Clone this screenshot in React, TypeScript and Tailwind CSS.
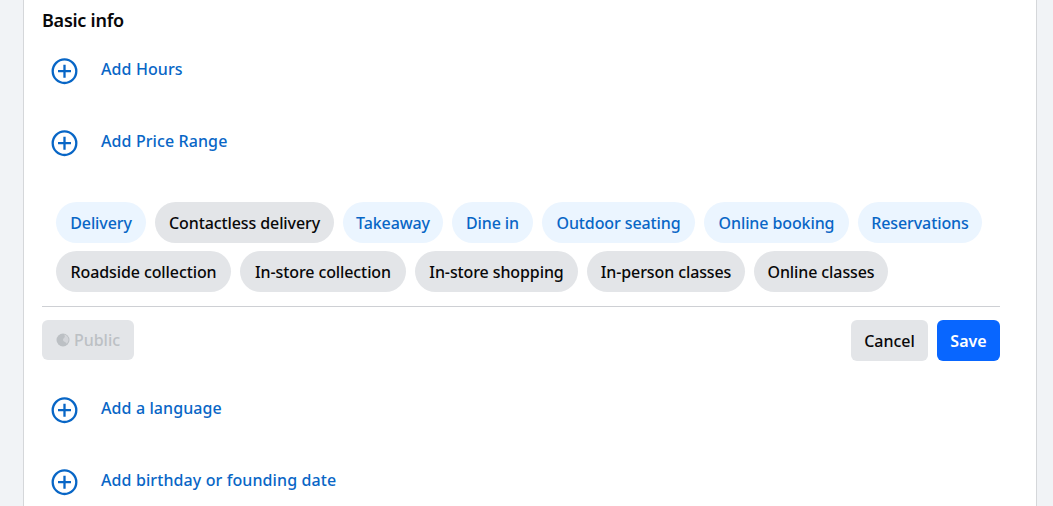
import React from 'react';

const font = { fontFamily: '"Noto Sans", "Open Sans", sans-serif' };

type ChipData = { label: string; width: string; active: boolean };

const firstRow: ChipData[] = [
  { label: 'Delivery', width: 'w-[90px]', active: true },
  { label: 'Contactless delivery', width: 'w-[179px]', active: false },
  { label: 'Takeaway', width: 'w-[100px]', active: true },
  { label: 'Dine in', width: 'w-[81px]', active: true },
  { label: 'Outdoor seating', width: 'w-[153px]', active: true },
  { label: 'Online booking', width: 'w-[145px]', active: true },
  { label: 'Reservations', width: 'w-[124px]', active: true },
];

const secondRow: ChipData[] = [
  { label: 'Roadside collection', width: 'w-[175px]', active: false },
  { label: 'In-store collection', width: 'w-[166px]', active: false },
  { label: 'In-store shopping', width: 'w-[163px]', active: false },
  { label: 'In-person classes', width: 'w-[158px]', active: false },
  { label: 'Online classes', width: 'w-[134px]', active: false },
];

function AddIcon() {
  return (
    <svg width="28" height="28" viewBox="0 0 28 28" fill="none" stroke="#0866c6" strokeWidth="2.3">
      <circle cx="14.5" cy="14.2" r="11.8" />
      <path d="M14.500 7.700v13M8 14.200h13" />
    </svg>
  );
}

function AddRow({ label, className }: { label: string; className: string }) {
  return (
    <div className={`flex items-start pl-[8px] ${className}`}>
      <AddIcon />
      <span className="ml-[23px] mt-[1px] text-[16px] leading-[22px] font-medium tracking-[0.1px] text-[#0866c6]">{label}</span>
    </div>
  );
}

function Chip({ label, width, active }: ChipData) {
  return (
    <div
      className={`h-[41px] rounded-full flex items-center justify-center text-[16px] font-medium tracking-[-0.1px] whitespace-nowrap ${width} ${
        active ? 'bg-[#ebf5ff] text-[#0866c6]' : 'bg-[#e3e5e8] text-[#080809]'
      }`}
    >
      {label}
    </div>
  );
}

export default function App() {
  return (
    <div className="h-[506px] w-[1053px] overflow-hidden bg-[#f1f3f6]" style={font}>
      <div className="ml-[23px] w-[1014px] h-full bg-white border-x border-[#d5d7da] pl-[18px] pr-[36px]">
        <h2 className="pt-[9px] text-[18px] leading-[23px] font-semibold tracking-[-0.25px] text-[#080809]">Basic info</h2>
        <AddRow label="Add Hours" className="mt-[25px]" />
        <AddRow label="Add Price Range" className="mt-[44px]" />

        <div className="mt-[45px] pl-[14px] flex flex-col gap-[8px]">
          <div className="flex gap-[9px]">
            {firstRow.map((c) => (
              <Chip key={c.label} {...c} />
            ))}
          </div>
          <div className="flex gap-[9px]">
            {secondRow.map((c) => (
              <Chip key={c.label} {...c} />
            ))}
          </div>
        </div>

        <div className="mt-[14px] border-t border-[#ced0d4] pt-[13px] flex items-start">
          <div className="h-[40px] w-[92px] rounded-[6px] bg-[#e3e5e8] flex items-center justify-center gap-[4px] text-[16px] font-medium text-[#bcc0c4]">
            <svg width="14" height="14" viewBox="0 0 14 14">
              <circle cx="7" cy="7" r="6.500" fill="#bcc0c4" />
              <path d="M8 1.500c2.500.3 4.500 2.500 4.500 5 0 1.800-.8 3.300-2 4.200-.4-1.500-1.800-1.700-2.800-2.500S6.800 6 8 5s1-2.500 0-3.500z" fill="#d3d5d9" />
            </svg>
            Public
          </div>
          <div className="ml-auto flex gap-[9px]">
            <div className="h-[41px] w-[77px] rounded-[6px] bg-[#e3e5e8] flex items-center justify-center text-[16px] font-medium text-[#080809]">Cancel</div>
            <div className="h-[41px] w-[63px] rounded-[6px] bg-[#0866ff] flex items-center justify-center text-[16px] font-semibold text-white">Save</div>
          </div>
        </div>

        <AddRow label="Add a language" className="mt-[35px]" />
        <AddRow label="Add birthday or founding date" className="mt-[44px]" />
      </div>
    </div>
  );
}
